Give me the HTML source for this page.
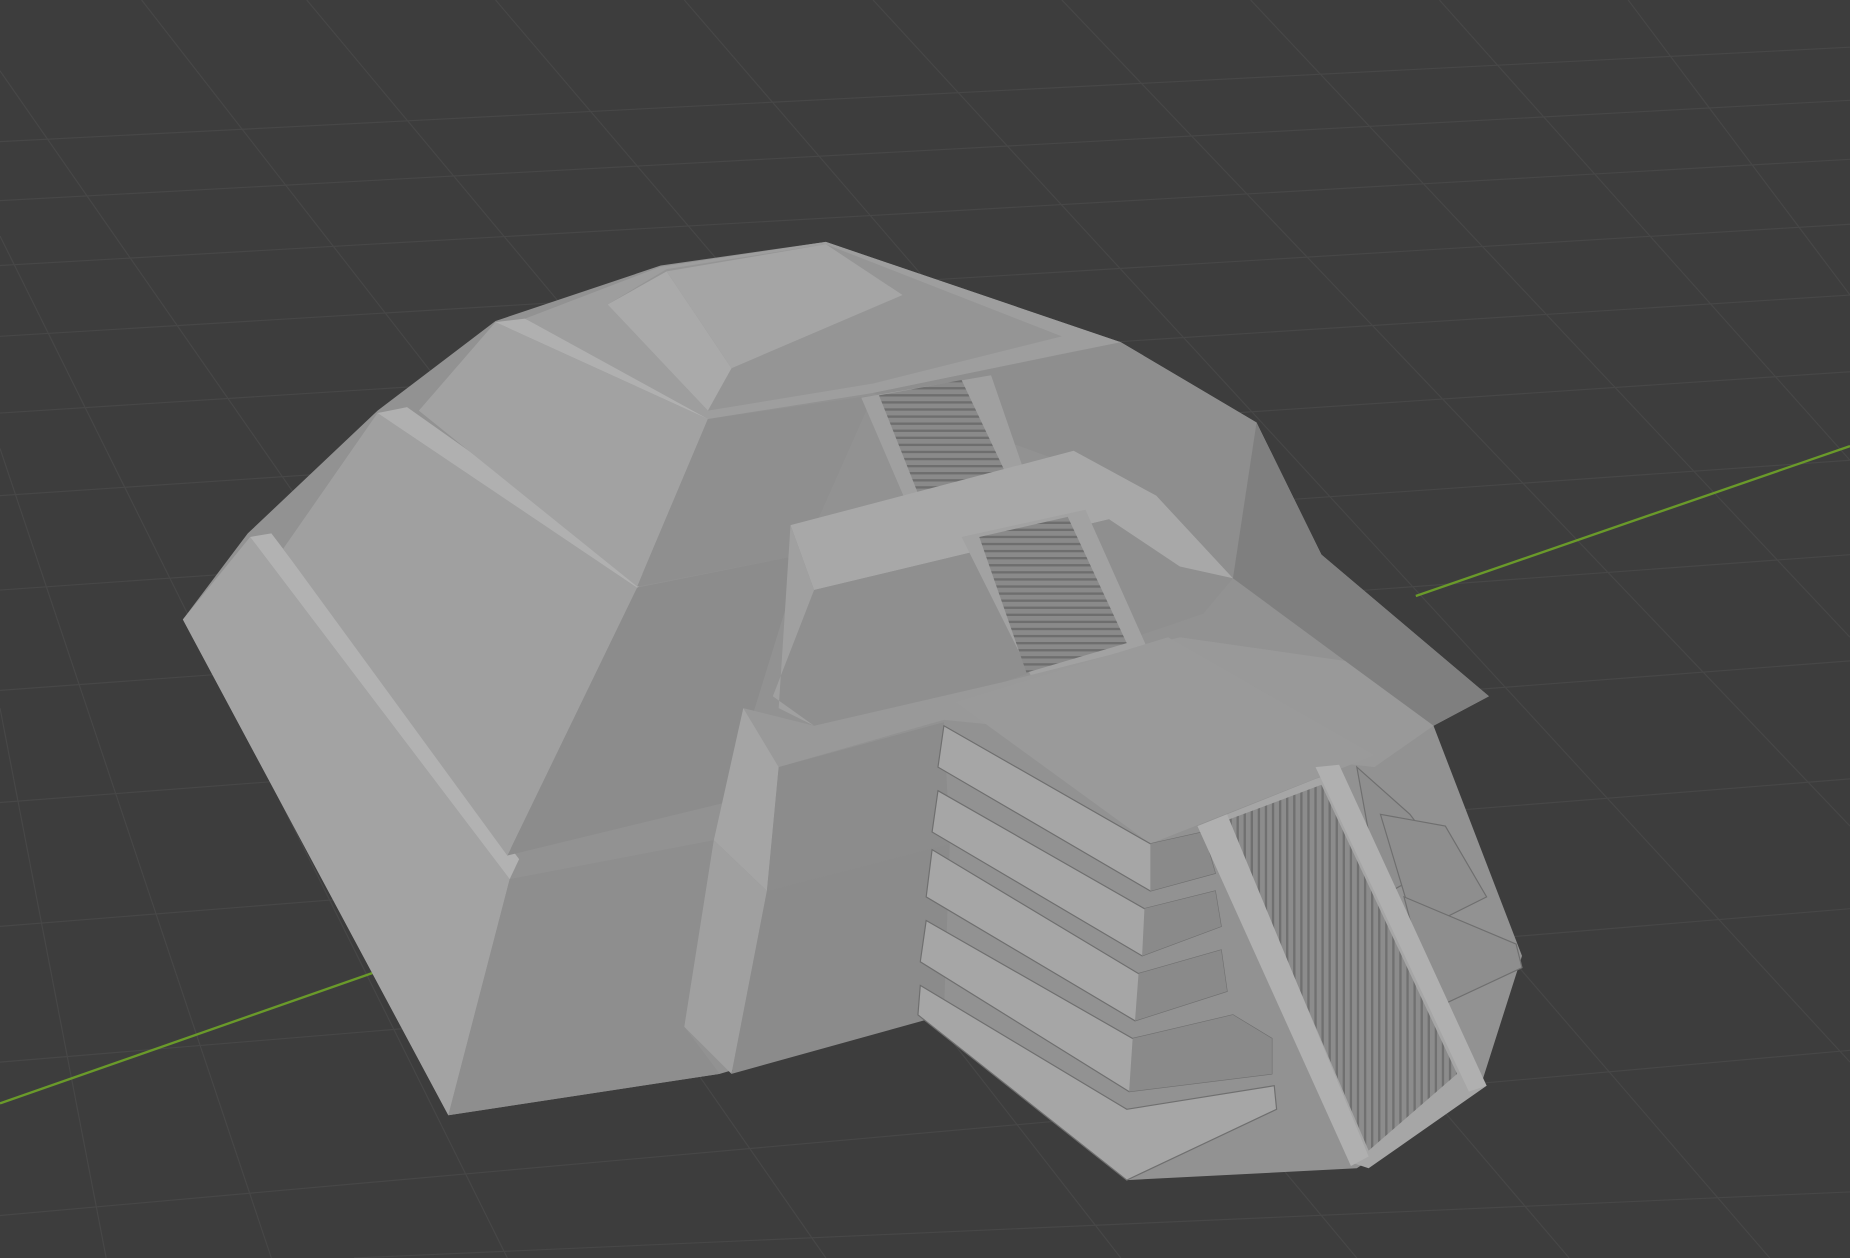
<!DOCTYPE html>
<html><head><meta charset="utf-8"><style>
html,body{margin:0;padding:0;background:#3d3d3d;overflow:hidden}
svg{display:block}
</style></head><body>
<svg width="1850" height="1258" viewBox="0 0 1568 1066" preserveAspectRatio="none" xmlns="http://www.w3.org/2000/svg">
<defs>
<pattern id="st" width="4" height="6" patternUnits="userSpaceOnUse"><rect width="4" height="6" fill="#8a8a8a"/><rect y="4" width="4" height="2" fill="#6e6e6e"/></pattern>
<pattern id="st2" width="6" height="4" patternUnits="userSpaceOnUse"><rect width="6" height="4" fill="#8c8c8c"/><rect x="4" width="2" height="4" fill="#707070"/></pattern>
</defs>
<rect width="1568" height="1066" fill="#3d3d3d"/>
<g stroke="#474747" stroke-width="1">
<!-- perspective grid approximations -->
<path d="M0 120 L1568 40 M0 170 L1568 85 M0 225 L1568 135 M0 285 L1568 190 M0 350 L1568 250 M0 420 L1568 315 M0 500 L1568 390 M0 585 L1568 470 M0 680 L1568 560 M0 785 L1568 660 M0 900 L1568 770 M0 1030 L1568 890 M300 1066 L1568 1010"/>
<path d="M0 60 L700 1066 M120 0 L950 1066 M260 0 L1150 1066 M420 0 L1330 1066 M580 0 L1500 1066 M740 0 L1568 900 M900 0 L1568 700 M1060 0 L1568 540 M1220 0 L1568 390 M0 200 L430 1066 M0 380 L230 1066 M0 600 L90 1066 M1380 0 L1568 250"/>
</g>
<line x1="0" y1="935" x2="320" y2="823" stroke="#6a9a2a" stroke-width="2"/>
<line x1="1200" y1="505" x2="1568" y2="378" stroke="#6a9a2a" stroke-width="2"/>

<!-- base silhouette -->
<polygon points="155,525 210,452 320,348 420,272 560,225 700,205 950,290 1065,358 1120,470 1262,590 1215,615 1290,810 1255,920 1150,990 955,1000 940,985 780,860 610,910 380,945" fill="#929292"/>
<!-- bottom tier left face -->
<polygon points="155,525 212,455 432,745 380,945" fill="#a3a3a3"/>
<polygon points="212,455 230,452 440,728 432,745" fill="#b2b2b2"/>
<!-- bottom tier front -->
<polygon points="432,745 605,712 580,870 610,910 380,945" fill="#8e8e8e"/>
<!-- tier 2 left -->
<polygon points="240,465 320,350 540,498 430,725" fill="#a0a0a0"/>
<polygon points="320,350 345,345 550,490 540,498" fill="#b0b0b0"/>
<!-- tier 2 front -->
<polygon points="430,725 540,498 680,470 615,680" fill="#8c8c8c"/>
<!-- tier 3 left -->
<polygon points="355,348 420,273 600,355 540,497" fill="#a2a2a2"/>
<polygon points="420,273 445,270 610,350 600,355" fill="#b0b0b0"/>
<!-- tier 3 front -->
<polygon points="540,497 600,355 740,335 680,470" fill="#8f8f8f"/>
<!-- top -->
<polygon points="445,270 560,226 700,205 950,290 900,300 740,333 600,355" fill="#9e9e9e"/>
<polygon points="515,258 565,228 700,207 900,285 740,325 600,348" fill="#959595"/>
<polygon points="565,230 700,207 765,250 620,312" fill="#a5a5a5"/>
<polygon points="565,230 620,312 600,348 515,258" fill="#aaaaaa"/>
<!-- right side of upper tiers -->
<polygon points="740,333 950,290 1065,358 1045,490 980,420" fill="#8e8e8e"/>
<polygon points="1045,490 1065,358 1120,470 1262,590 1215,615 1140,560" fill="#7f7f7f"/>
<!-- top stair -->
<polygon points="730,337 840,318 870,405 770,430" fill="#a0a0a0"/>
<polygon points="745,335 815,322 852,400 778,418" fill="url(#st)"/>
<!-- middle tier block -->
<polygon points="670,445 910,382 980,420 1045,490 1020,510 940,440 690,500" fill="#a8a8a8"/>
<polygon points="690,500 940,440 1000,480 1045,490 1020,520 850,578 690,615 655,590" fill="#8f8f8f"/>
<polygon points="670,445 690,500 655,590 690,615 660,600" fill="#a0a0a0"/>
<!-- middle stair -->
<polygon points="815,455 920,432 975,555 880,585" fill="#a2a2a2"/>
<polygon points="830,455 905,438 955,545 870,570" fill="url(#st)"/>
<!-- lower tier block -->
<polygon points="630,600 690,615 850,578 1000,540 1140,560 1215,615 1165,650 900,620 800,610 660,650" fill="#999"/>
<polygon points="605,712 630,600 660,650 650,755" fill="#a5a5a5"/>
<polygon points="650,755 660,650 800,612 805,715" fill="#8c8c8c"/>
<polygon points="580,870 605,712 650,755 620,910" fill="#a0a0a0"/>
<polygon points="620,910 650,755 805,715 800,860" fill="#8b8b8b"/>
<!-- front platform -->
<polygon points="810,595 990,540 1165,640 975,715" fill="#9a9a9a"/>
<g fill="#a6a6a6" stroke="#6f6f6f" stroke-width="1">
<polygon points="800,615 975,715 1020,705 1030,740 975,755 795,650"/>
<polygon points="795,670 970,770 1030,755 1035,785 968,810 790,705"/>
<polygon points="790,720 965,825 1035,805 1040,840 962,865 785,760"/>
<polygon points="785,780 960,880 1045,860 1078,880 1078,910 957,925 780,815"/>
<polygon points="780,835 955,940 1080,920 1082,940 955,1000 778,860"/>
</g>
<g fill="#8a8a8a">
<polygon points="975,715 1020,705 1030,740 975,755"/>
<polygon points="970,770 1030,755 1035,785 968,810"/>
<polygon points="965,825 1035,805 1040,840 962,865"/>
<polygon points="960,880 1045,860 1078,880 1078,910 957,925"/>
</g>
<!-- right steps -->
<g fill="#8e8e8e" stroke="#6f6f6f">
<polygon points="1150,650 1195,690 1225,730 1170,760"/>
<polygon points="1170,690 1225,700 1260,760 1200,790"/>
<polygon points="1190,760 1285,800 1290,820 1215,855"/>
</g>
<!-- front stair -->
<polygon points="1015,700 1115,660 1130,655 1260,920 1160,990 1145,985" fill="#a6a6a6"/>
<polygon points="1040,695 1120,665 1235,910 1160,975" fill="url(#st2)"/>
<polygon points="1115,650 1135,648 1260,920 1245,925" fill="#b0b0b0"/>
<polygon points="1015,700 1040,690 1160,980 1145,988" fill="#b0b0b0"/>
</svg>
</body></html>
